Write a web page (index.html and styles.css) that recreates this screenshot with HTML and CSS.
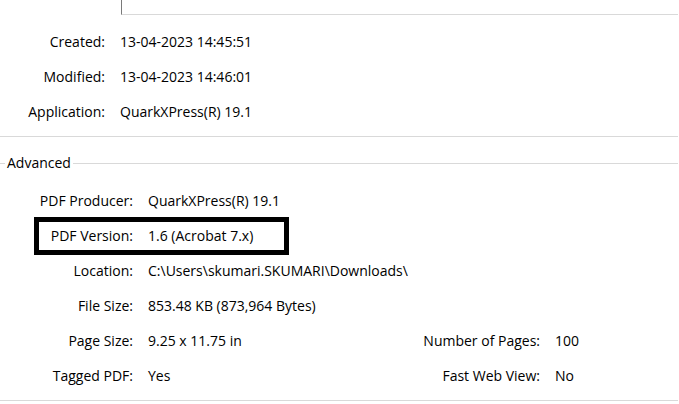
FILE: index.html
```html
<!DOCTYPE html>
<html>
<head>
<meta charset="utf-8">
<link rel="stylesheet" href="styles.css">
</head>
<body>
<div class="page">
  <div class="field-stub"></div>

  <section class="basic">
    <div class="row"><span class="label">Created:</span><span class="value">13-04-2023 14:45:51</span></div>
    <div class="row"><span class="label">Modified:</span><span class="value">13-04-2023 14:46:01</span></div>
    <div class="row"><span class="label">Application:</span><span class="value">QuarkXPress(R) 19.1</span></div>
  </section>

  <section class="advanced">
    <div class="group-head"><span class="group-title">Advanced</span></div>
    <div class="arow"><span class="label">PDF Producer:</span><span class="value">QuarkXPress(R) 19.1</span></div>
    <div class="arow"><span class="label">PDF Version:</span><span class="value">1.6 (Acrobat 7.x)</span><span class="highlight"></span></div>
    <div class="arow"><span class="label">Location:</span><span class="value wide">C:\Users\skumari.SKUMARI\Downloads\</span></div>
    <div class="arow"><span class="label">File Size:</span><span class="value wide">853.48 KB (873,964 Bytes)</span></div>
    <div class="arow"><span class="label">Page Size:</span><span class="value">9.25 x 11.75 in</span><span class="label">Number of Pages:</span><span class="value">100</span></div>
    <div class="arow"><span class="label">Tagged PDF:</span><span class="value">Yes</span><span class="label">Fast Web View:</span><span class="value">No</span></div>
  </section>
</div>
</body>
</html>
```
FILE: styles.css
```css
html, body {
  margin: 0;
  padding: 0;
  background: #ffffff;
}

body {
  font-family: "Open Sans", "Noto Sans", sans-serif;
  font-size: 14px;
  color: #000000;
}

.page {
  width: 678px;
  height: 404px;
  overflow: hidden;
}

.field-stub {
  margin-left: 121px;
  height: 14px;
  border-left: 1px solid #7a7a7a;
  border-bottom: 1px solid #d9d9d9;
}

.basic {
  padding: 9px 0 7px 0;
  border-bottom: 1px solid #d9d9d9;
}

.row {
  display: grid;
  grid-template-columns: 105px auto;
  column-gap: 15px;
  height: 35px;
  line-height: 35px;
  white-space: nowrap;
}

.label {
  text-align: right;
}

.advanced {
  padding: 16px 0 7px 0;
  border-bottom: 1px solid #d9d9d9;
}

.group-head {
  display: flex;
  align-items: center;
  height: 20px;
  line-height: 20px;
  margin-bottom: 10px;
}

.group-head::before {
  content: "";
  width: 5px;
  height: 1px;
  background: #d9d9d9;
  margin-right: 2px;
}

.group-head::after {
  content: "";
  flex: 1;
  height: 1px;
  background: #d9d9d9;
  margin-left: 2px;
}

.arow {
  position: relative;
  display: grid;
  grid-template-columns: 133px 244px 133px auto;
  column-gap: 15px;
  height: 35px;
  line-height: 35px;
  white-space: nowrap;
}

.value.wide {
  grid-column: 2 / 5;
}

.highlight {
  position: absolute;
  left: 34px;
  top: -1px;
  width: 245px;
  height: 28px;
  border: 5px solid #000000;
}
```
